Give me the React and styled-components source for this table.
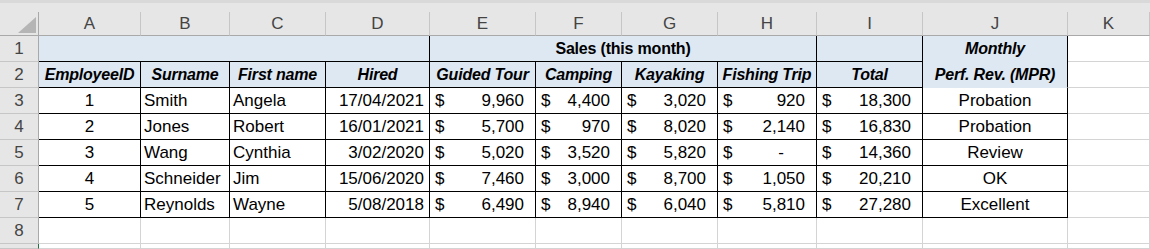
import React from "react";
import styled, { createGlobalStyle, css } from "styled-components";

const GRID = "#d4d4d4";
const HDR_BG = "#e6e6e6";
const HDR_LINE = "#c6c6c6";
const HDR_EDGE = "#a9a9a9";
const BLUE = "#dde8f3";
const INK = "#000";
const FONT = `"Liberation Sans", Arial, sans-serif`;

const GlobalStyle = createGlobalStyle`
  html, body { margin: 0; padding: 0; background: #fff; }
  body { font-family: ${FONT}; }
`;

const Sheet = styled.div`
  display: grid;
  grid-template-columns: 39px 102px 89px 96px 104px 106px 86px 96px 99px 106px 145px 1fr;
  grid-template-rows: 12px 24px repeat(8, 26px) 1fr;
  width: 1150px;
  height: 249px;
  overflow: hidden;
  font-family: ${FONT};
  color: ${INK};
`;

const TopStrip = styled.div`
  grid-column: 1 / -1;
  background: ${HDR_BG};
  border-top: 3px solid #d9d9d9;
  box-sizing: border-box;
`;

const Corner = styled.div`
  background: ${HDR_BG};
  border-right: 1px solid ${HDR_EDGE};
  border-bottom: 1px solid ${HDR_EDGE};
  box-sizing: border-box;
  display: flex;
  align-items: flex-end;
  justify-content: flex-end;
  padding: 0 2px 2px 0;
`;

const ColHeader = styled.div`
  background: ${HDR_BG};
  border-right: 1px solid ${HDR_LINE};
  border-bottom: 1px solid ${HDR_EDGE};
  box-sizing: border-box;
  display: flex;
  align-items: center;
  justify-content: center;
  font-size: 17px;
  color: #444;
`;

const RowHeader = styled.div`
  background: ${HDR_BG};
  border-right: 1px solid ${HDR_EDGE};
  border-bottom: 1px solid ${HDR_LINE};
  box-sizing: border-box;
  display: flex;
  align-items: center;
  justify-content: center;
  font-size: 17px;
  color: #444;
  ${(p) =>
    p.$active &&
    css`
      border-right-color: #217346;
      box-shadow: 1px 0 0 #217346;
    `}
`;

const Cell = styled.div`
  box-sizing: border-box;
  background: ${(p) => (p.$fill ? BLUE : "#fff")};
  border-right: 1px solid ${(p) => p.$br || (p.$fill ? BLUE : GRID)};
  border-bottom: 1px solid ${(p) => p.$bb || (p.$fill ? BLUE : GRID)};
  grid-column: ${(p) => p.$span || "auto"};
  grid-row: ${(p) => p.$rows || "auto"};
  display: flex;
  align-items: center;
  justify-content: ${(p) =>
    p.$align === "left" ? "flex-start" : p.$align === "right" ? "flex-end" : "center"};
  padding: 0 ${(p) => (p.$align === "right" ? "5px" : "4px")} 0
    ${(p) => (p.$align === "left" ? "3px" : "4px")};
  font-size: 17px;
  line-height: 25px;
  white-space: nowrap;
  overflow: hidden;
`;

const HeadCell = styled(Cell)`
  font-weight: bold;
  font-style: ${(p) => (p.$upright ? "normal" : "italic")};
  font-size: 16px;
  letter-spacing: -0.2px;
  padding: 0 1px;
`;

const Stack = styled.div`
  display: flex;
  flex-direction: column;
  align-items: center;
  line-height: 26px;
`;

const MoneyCell = styled(Cell)`
  justify-content: space-between;
  padding: 0 11px 0 5px;
`;

const Dash = styled.span`
  margin-right: 21px;
`;

const B = "#000";

const employees = [
  { id: 1, surname: "Smith", first: "Angela", hired: "17/04/2021", tour: 9960, camping: 4400, kayak: 3020, fishing: 920, total: 18300, mpr: "Probation" },
  { id: 2, surname: "Jones", first: "Robert", hired: "16/01/2021", tour: 5700, camping: 970, kayak: 8020, fishing: 2140, total: 16830, mpr: "Probation" },
  { id: 3, surname: "Wang", first: "Cynthia", hired: "3/02/2020", tour: 5020, camping: 3520, kayak: 5820, fishing: 0, total: 14360, mpr: "Review" },
  { id: 4, surname: "Schneider", first: "Jim", hired: "15/06/2020", tour: 7460, camping: 3000, kayak: 8700, fishing: 1050, total: 20210, mpr: "OK" },
  { id: 5, surname: "Reynolds", first: "Wayne", hired: "5/08/2018", tour: 6490, camping: 8940, kayak: 6040, fishing: 5810, total: 27280, mpr: "Excellent" },
];

const cols = ["A", "B", "C", "D", "E", "F", "G", "H", "I", "J", "K"];

function Money({ value }) {
  return (
    <MoneyCell $br={B} $bb={B}>
      <span>$</span>
      {value === 0 ? <Dash>-</Dash> : <span>{value.toLocaleString("en-US")}</span>}
    </MoneyCell>
  );
}

function CornerMark() {
  return (
    <svg width="18" height="16" viewBox="0 0 18 16">
      <polygon points="18,0 18,16 0,16" fill="#b5b5b5" />
    </svg>
  );
}

export default function App() {
  return (
    <>
      <GlobalStyle />
      <Sheet>
        <TopStrip />
        <Corner>
          <CornerMark />
        </Corner>
        {cols.map((c) => (
          <ColHeader key={c}>{c}</ColHeader>
        ))}

        {/* Row 1 */}
        <RowHeader>1</RowHeader>
        <Cell $fill $span="span 4" $br={B} $bb={B} />
        <HeadCell $fill $upright $span="span 4" $br={B} $bb={B}>
          Sales (this month)
        </HeadCell>
        <Cell $fill $br={B} $bb={B} />
        <HeadCell $fill $rows="span 2" $br={B}>
          <Stack>
            <span>Monthly</span>
            <span>Perf. Rev. (MPR)</span>
          </Stack>
        </HeadCell>
        <Cell />

        {/* Row 2 */}
        <RowHeader>2</RowHeader>
        {["EmployeeID", "Surname", "First name", "Hired", "Guided Tour", "Camping", "Kayaking", "Fishing Trip", "Total"].map(
          (h) => (
            <HeadCell key={h} $fill $br={B} $bb={B}>
              {h}
            </HeadCell>
          )
        )}
        <Cell />

        {employees.map((e, i) => (
          <React.Fragment key={e.id}>
            <RowHeader>{i + 3}</RowHeader>
            <Cell $br={B} $bb={B}>{e.id}</Cell>
            <Cell $align="left" $br={B} $bb={B}>{e.surname}</Cell>
            <Cell $align="left" $br={B} $bb={B}>{e.first}</Cell>
            <Cell $align="right" $br={B} $bb={B}>{e.hired}</Cell>
            <Money value={e.tour} />
            <Money value={e.camping} />
            <Money value={e.kayak} />
            <Money value={e.fishing} />
            <Money value={e.total} />
            <Cell $br={B} $bb={B}>{e.mpr}</Cell>
            <Cell />
          </React.Fragment>
        ))}

        {/* Row 8 */}
        <RowHeader>8</RowHeader>
        {cols.map((c) => (
          <Cell key={"r8" + c} />
        ))}

        {/* Row 9 (partially visible) */}
        <RowHeader $active />
        {cols.map((c) => (
          <Cell key={"r9" + c} />
        ))}
      </Sheet>
    </>
  );
}
